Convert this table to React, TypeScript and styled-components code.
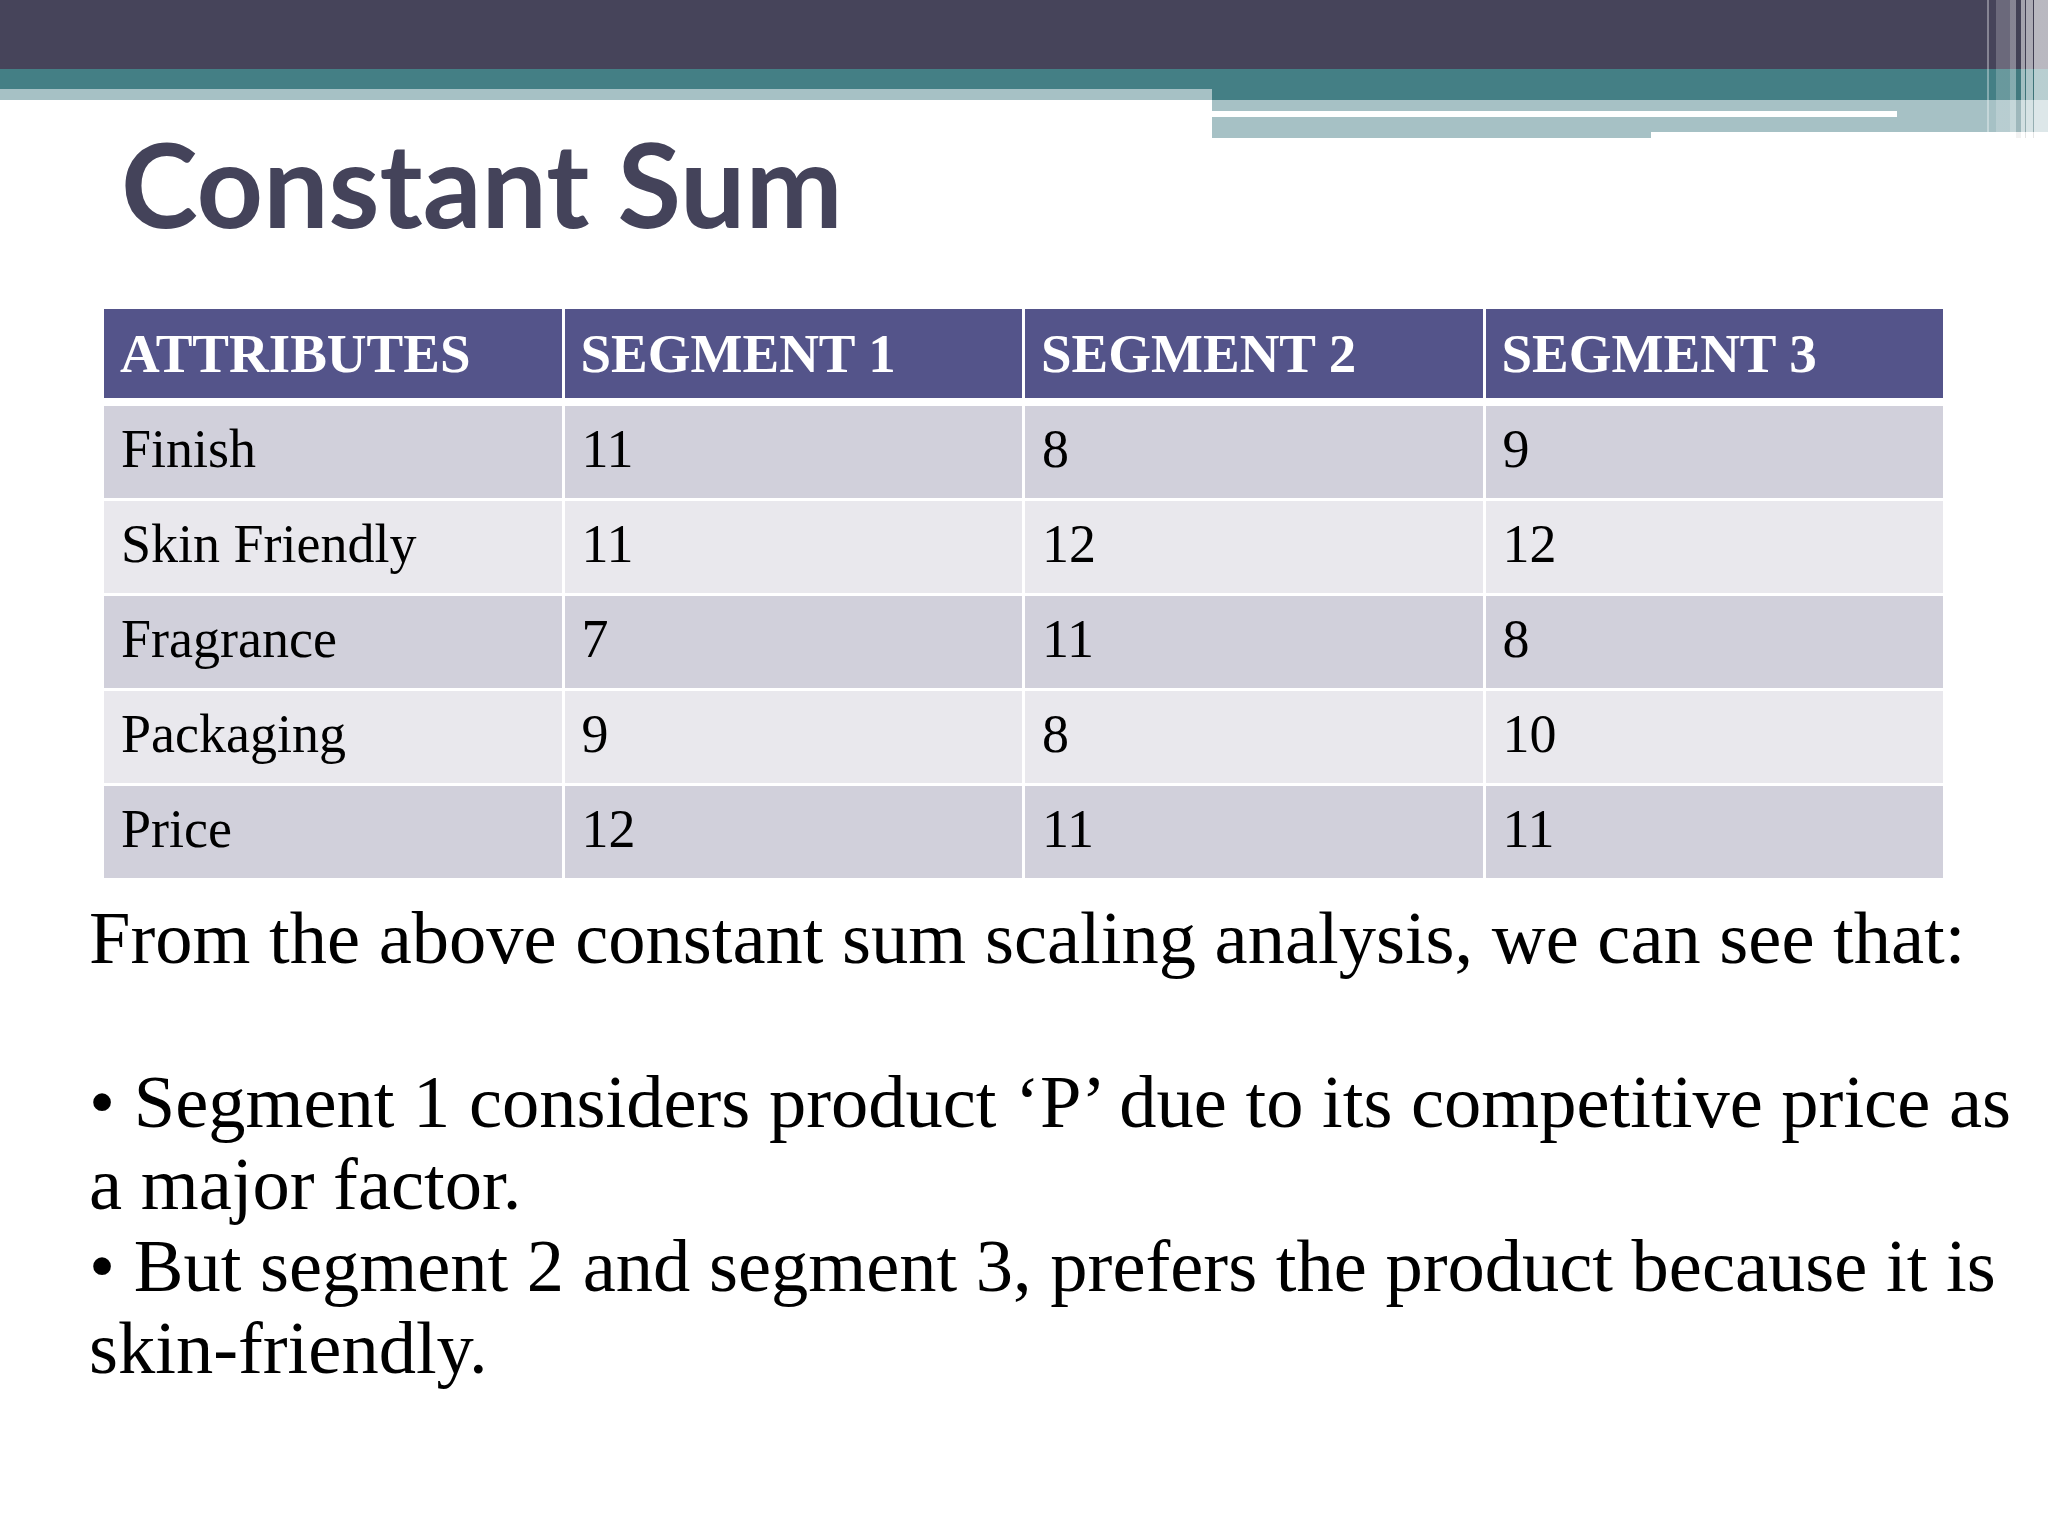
import React from 'react';
import styled, {createGlobalStyle} from 'styled-components';

interface Row {
  name: string;
  values: string[];
}

const headers = ['ATTRIBUTES', 'SEGMENT 1', 'SEGMENT 2', 'SEGMENT 3'];

const rows: Row[] = [
  {name: 'Finish', values: ['11', '8', '9']},
  {name: 'Skin Friendly', values: ['11', '12', '12']},
  {name: 'Fragrance', values: ['7', '11', '8']},
  {name: 'Packaging', values: ['9', '8', '10']},
  {name: 'Price', values: ['12', '11', '11']},
];

const DARK = '#46445a';
const TEAL = '#447f85';
const LIGHT = '#a6c1c5';

const App = () => {
  return (
    <>
      <GlobalStyle />
      <Slide>
        {/* decorative bars across the top of the slide */}
        <Banner>
          <DarkBar />
          <BandRow>
            <LeftBand>
              <Strip $h={20} $c={TEAL} />
              <Strip $h={11} $c={LIGHT} />
            </LeftBand>
            <RightBand>
              <Strip $h={31} $c={TEAL} />
              <Strip $h={11} $c={LIGHT} />
              <PieceRow $h={6}>
                <Piece $w={685} $c="#ffffff" />
                <Piece $c={LIGHT} />
              </PieceRow>
              <Strip $h={15} $c={LIGHT} />
              <PieceRow $h={6}>
                <Piece $w={439} $c={LIGHT} />
                <Piece $c="#ffffff" />
              </PieceRow>
            </RightBand>
          </BandRow>
          <Stripes />
        </Banner>

        <Title>Constant Sum</Title>

        <Table>
          {headers.map(h => (
            <HeadCell key={h}>{h}</HeadCell>
          ))}
          {rows.map((row, i) =>
            [row.name, ...row.values].map((v, j) => (
              <Cell key={`${i}-${j}`} $odd={i % 2 === 0}>
                {v}
              </Cell>
            )),
          )}
        </Table>

        <Body>
          <Line>From the above constant sum scaling analysis, we can see that:</Line>
          <Line>&nbsp;</Line>
          <Line>• Segment 1 considers product ‘P’ due to its competitive price as</Line>
          <Line>a major factor.</Line>
          <Line>• But segment 2 and segment 3, prefers the product because it is</Line>
          <Line>skin-friendly.</Line>
        </Body>
      </Slide>
    </>
  );
};

export default App;

const GlobalStyle = createGlobalStyle`
  html, body {
    margin: 0;
    padding: 0;
    background: #ffffff;
  }
  body {
    font-family: "Liberation Serif", "Times New Roman", serif;
  }
`;

const Slide = styled.div`
  width: 2048px;
  height: 1536px;
  background: #ffffff;
  overflow: hidden;
  display: flex;
  flex-direction: column;
`;

const Banner = styled.div`
  position: relative;
  height: 138px;
  display: flex;
  flex-direction: column;
`;

const DarkBar = styled.div`
  height: 69px;
  background: ${DARK};
`;

const BandRow = styled.div`
  display: flex;
  align-items: flex-start;
`;

const LeftBand = styled.div`
  width: 1212px;
  display: flex;
  flex-direction: column;
`;

const RightBand = styled.div`
  flex: 1;
  display: flex;
  flex-direction: column;
`;

const Strip = styled.div<{$h: number; $c: string}>`
  height: ${p => p.$h}px;
  background: ${p => p.$c};
`;

const PieceRow = styled.div<{$h: number}>`
  display: flex;
  height: ${p => p.$h}px;
`;

const Piece = styled.div<{$w?: number; $c: string}>`
  ${p => (p.$w ? `width: ${p.$w}px;` : 'flex: 1;')}
  background: ${p => p.$c};
`;

// thin vertical lines laid over the bars at the right edge
const Stripes = styled.div`
  position: absolute;
  top: 0;
  right: 0;
  width: 61px;
  height: 138px;
  background: linear-gradient(
    to right,
    rgba(255, 255, 255, 0.35) 0px,
    rgba(255, 255, 255, 0.35) 2px,
    rgba(255, 255, 255, 0) 2px,
    rgba(255, 255, 255, 0) 9px,
    rgba(255, 255, 255, 0.2) 9px,
    rgba(255, 255, 255, 0.2) 23px,
    rgba(255, 255, 255, 0.35) 23px,
    rgba(255, 255, 255, 0.35) 29px,
    rgba(0, 0, 0, 0.05) 29px,
    rgba(0, 0, 0, 0.05) 34px,
    rgba(255, 255, 255, 0.5) 34px,
    rgba(255, 255, 255, 0.5) 38px,
    rgba(0, 0, 0, 0.1) 38px,
    rgba(0, 0, 0, 0.1) 39px,
    rgba(255, 255, 255, 0.55) 39px,
    rgba(255, 255, 255, 0.55) 46px,
    rgba(0, 0, 0, 0.1) 46px,
    rgba(0, 0, 0, 0.1) 47px,
    rgba(255, 255, 255, 0.62) 47px,
    rgba(255, 255, 255, 0.62) 61px
  );
`;

const Title = styled.h1`
  margin: 0;
  padding-left: 121px;
  font-family: Lato, "Open Sans", sans-serif;
  font-weight: 700;
  font-size: 116px;
  line-height: 0.8;
  color: #44435a;
`;

const Table = styled.div`
  margin: 78px 105px 0 104px;
  display: grid;
  grid-template-columns: repeat(4, 1fr);
  grid-template-rows: 94.5px repeat(5, 92.5px);
  column-gap: 3px;
  row-gap: 2.5px;
`;

const HeadCell = styled.div`
  margin-bottom: 5.5px;
  padding: 17px 0 0 16px;
  background: #54548a;
  color: #ffffff;
  font-family: "Liberation Serif", "Times New Roman", serif;
  font-weight: 700;
  font-size: 55px;
  line-height: 1;
  white-space: nowrap;
`;

const Cell = styled.div<{$odd: boolean}>`
  padding: 16px 0 0 17px;
  background: ${p => (p.$odd ? '#d1d0db' : '#e9e8ed')};
  color: #000000;
  font-family: "Liberation Serif", "Times New Roman", serif;
  font-size: 54px;
  line-height: 1;
  white-space: nowrap;
`;

const Body = styled.div`
  margin-top: 19px;
  padding-left: 89px;
  font-family: "Liberation Serif", "Times New Roman", serif;
  font-size: 74.5px;
  line-height: 82px;
  color: #000000;
`;

const Line = styled.div`
  white-space: nowrap;
`;
